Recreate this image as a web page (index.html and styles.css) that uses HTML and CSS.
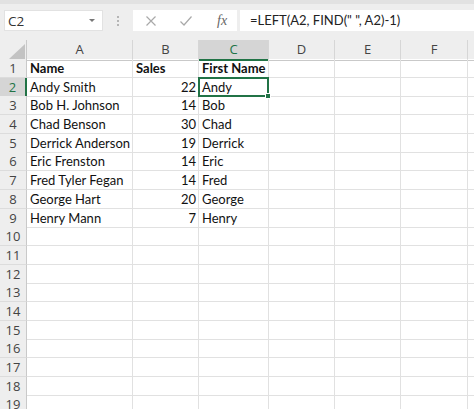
FILE: index.html
```html
<!DOCTYPE html>
<html>
<head>
<meta charset="utf-8">
<link rel="stylesheet" href="styles.css">
</head>
<body>
<div class="app">
  <div class="topstrip"></div>
  <div class="toolbar">
    <div class="namebox">
      <span class="ref">C2</span>
      <span class="caret"></span>
    </div>
    <div class="grip"><i></i><i></i><i></i></div>
    <div class="fxbox">
      <svg class="ico" width="12" height="12" viewBox="0 0 12 12"><path d="M1.5 1.5 L10.5 10.5 M10.5 1.5 L1.5 10.5" stroke="#a9a9a9" stroke-width="1.2" fill="none"/></svg>
      <svg class="ico" width="14" height="12" viewBox="0 0 14 12"><path d="M1.5 6.5 L5 10 L12.5 1.5" stroke="#a9a9a9" stroke-width="1.2" fill="none"/></svg>
      <span class="fx">fx</span>
    </div>
    <div class="formula">=LEFT(A2, FIND(" ", A2)-1)</div>
  </div>
  <div class="sheet">
    <div class="row head">
      <div class="rh corner"><svg width="16" height="15" viewBox="0 0 16 15"><polygon points="16,0 16,15 0,15" fill="#c3c3c3"/></svg></div>
      <div class="ch">A</div><div class="ch">B</div><div class="ch sel">C</div><div class="ch">D</div><div class="ch">E</div><div class="ch">F</div><div class="ch"></div>
    </div>
    <div class="row"><div class="rh">1</div><div class="c b">Name</div><div class="c b">Sales</div><div class="c b">First Name</div><div class="c"></div><div class="c"></div><div class="c"></div><div class="c"></div></div>
    <div class="row"><div class="rh sel">2</div><div class="c">Andy Smith</div><div class="c n">22</div><div class="c active">Andy</div><div class="c"></div><div class="c"></div><div class="c"></div><div class="c"></div></div>
    <div class="row"><div class="rh">3</div><div class="c">Bob H. Johnson</div><div class="c n">14</div><div class="c">Bob</div><div class="c"></div><div class="c"></div><div class="c"></div><div class="c"></div></div>
    <div class="row"><div class="rh">4</div><div class="c">Chad Benson</div><div class="c n">30</div><div class="c">Chad</div><div class="c"></div><div class="c"></div><div class="c"></div><div class="c"></div></div>
    <div class="row"><div class="rh">5</div><div class="c">Derrick Anderson</div><div class="c n">19</div><div class="c">Derrick</div><div class="c"></div><div class="c"></div><div class="c"></div><div class="c"></div></div>
    <div class="row"><div class="rh">6</div><div class="c">Eric Frenston</div><div class="c n">14</div><div class="c">Eric</div><div class="c"></div><div class="c"></div><div class="c"></div><div class="c"></div></div>
    <div class="row"><div class="rh">7</div><div class="c">Fred Tyler Fegan</div><div class="c n">14</div><div class="c">Fred</div><div class="c"></div><div class="c"></div><div class="c"></div><div class="c"></div></div>
    <div class="row"><div class="rh">8</div><div class="c">George Hart</div><div class="c n">20</div><div class="c">George</div><div class="c"></div><div class="c"></div><div class="c"></div><div class="c"></div></div>
    <div class="row"><div class="rh">9</div><div class="c">Henry Mann</div><div class="c n">7</div><div class="c">Henry</div><div class="c"></div><div class="c"></div><div class="c"></div><div class="c"></div></div>
    <div class="row"><div class="rh">10</div><div class="c"></div><div class="c"></div><div class="c"></div><div class="c"></div><div class="c"></div><div class="c"></div><div class="c"></div></div>
    <div class="row"><div class="rh">11</div><div class="c"></div><div class="c"></div><div class="c"></div><div class="c"></div><div class="c"></div><div class="c"></div><div class="c"></div></div>
    <div class="row"><div class="rh">12</div><div class="c"></div><div class="c"></div><div class="c"></div><div class="c"></div><div class="c"></div><div class="c"></div><div class="c"></div></div>
    <div class="row"><div class="rh">13</div><div class="c"></div><div class="c"></div><div class="c"></div><div class="c"></div><div class="c"></div><div class="c"></div><div class="c"></div></div>
    <div class="row"><div class="rh">14</div><div class="c"></div><div class="c"></div><div class="c"></div><div class="c"></div><div class="c"></div><div class="c"></div><div class="c"></div></div>
    <div class="row"><div class="rh">15</div><div class="c"></div><div class="c"></div><div class="c"></div><div class="c"></div><div class="c"></div><div class="c"></div><div class="c"></div></div>
    <div class="row"><div class="rh">16</div><div class="c"></div><div class="c"></div><div class="c"></div><div class="c"></div><div class="c"></div><div class="c"></div><div class="c"></div></div>
    <div class="row"><div class="rh">17</div><div class="c"></div><div class="c"></div><div class="c"></div><div class="c"></div><div class="c"></div><div class="c"></div><div class="c"></div></div>
    <div class="row"><div class="rh">18</div><div class="c"></div><div class="c"></div><div class="c"></div><div class="c"></div><div class="c"></div><div class="c"></div><div class="c"></div></div>
    <div class="row"><div class="rh">19</div><div class="c"></div><div class="c"></div><div class="c"></div><div class="c"></div><div class="c"></div><div class="c"></div><div class="c"></div></div>
  </div>
</div>
</body>
</html>
```

FILE: styles.css
```css
html, body {
  margin: 0;
  padding: 0;
  background: #ffffff;
}
.app {
  width: 474px;
  height: 409px;
  overflow: hidden;
  font-family: "Lato", "Open Sans", sans-serif;
}
.topstrip {
  height: 4px;
  background: #e2e2e2;
}
.toolbar {
  height: 36px;
  box-sizing: border-box;
  padding-top: 6px;
  background: #eeeeee;
  display: flex;
  align-items: flex-start;
}
.namebox {
  margin-left: 4px;
  width: 99px;
  height: 21px;
  box-sizing: border-box;
  background: #fff;
  border: 1px solid #e2e2e2;
  display: flex;
  align-items: center;
  justify-content: space-between;
  padding: 0 7px 0 3px;
  font-family: "Open Sans", sans-serif;
  font-size: 13.5px;
  color: #333;
}
.caret {
  width: 0;
  height: 0;
  border-left: 3.5px solid transparent;
  border-right: 3.5px solid transparent;
  border-top: 3.5px solid #777;
}
.grip {
  width: 30px;
  height: 21px;
  display: flex;
  flex-direction: column;
  align-items: center;
  justify-content: center;
  gap: 2px;
}
.grip i {
  display: block;
  width: 2px;
  height: 2px;
  background: #b5b5b5;
}
.fxbox {
  width: 104px;
  height: 21px;
  background: #fff;
  display: flex;
  align-items: center;
  box-sizing: border-box;
  padding-left: 12px;
  gap: 22px;
}
.fx {
  font-family: "Liberation Serif", serif;
  font-style: italic;
  font-size: 14px;
  color: #666;
  margin-left: 2px;
}
.formula {
  margin-left: 3px;
  flex: 1;
  height: 21px;
  background: #fff;
  box-sizing: border-box;
  padding-left: 10px;
  font-size: 13px;
  line-height: 21px;
  color: #222;
  white-space: nowrap;
}
.sheet {
  display: flex;
  flex-direction: column;
}
.row {
  display: grid;
  grid-template-columns: 27px 106px 66px 70px 66px 66px 67px 20px;
  height: 18.7px;
}
.row.head {
  height: 19px;
  background: #eeeeee;
}
.rh {
  background: #eeeeee;
  border-right: 1px solid #c9c9c9;
  border-bottom: 1px solid #dcdcdc;
  box-sizing: border-box;
  text-align: center;
  font-family: "Open Sans", sans-serif;
  font-size: 13px;
  line-height: 18px;
  color: #444;
}
.rh.sel {
  background: #d5d5d5;
  border-right: 2px solid #217346;
  color: #217346;
}
.corner {
  display: flex;
  align-items: flex-end;
  justify-content: flex-end;
  padding: 0 1px 1px 0;
  border-bottom: 1px solid #c9c9c9;
}
.ch {
  border-right: 1px solid #d6d6d6;
  border-bottom: 1px solid #c9c9c9;
  box-sizing: border-box;
  text-align: center;
  font-family: "Open Sans", sans-serif;
  font-size: 13px;
  line-height: 19px;
  color: #444;
}
.ch.sel {
  background: #d5d5d5;
  border-bottom: 2px solid #217346;
  color: #217346;
}
.c {
  border-right: 1px solid #e1e1e1;
  border-bottom: 1px solid #e1e1e1;
  box-sizing: border-box;
  padding-left: 3px;
  font-size: 13px;
  line-height: 18px;
  color: #111;
  white-space: nowrap;
}
.c.b {
  font-weight: bold;
  font-size: 13px;
}
.c.n {
  text-align: right;
  padding-right: 2px;
}
.c.active {
  position: relative;
}
.c.active::after {
  content: "";
  position: absolute;
  left: -1px;
  top: -1px;
  right: -1px;
  bottom: -1px;
  border: 2px solid #217346;
}
.c.active::before {
  content: "";
  position: absolute;
  right: -3px;
  bottom: -3px;
  width: 4px;
  height: 4px;
  background: #217346;
  border: 1px solid #fff;
  z-index: 2;
}
```
